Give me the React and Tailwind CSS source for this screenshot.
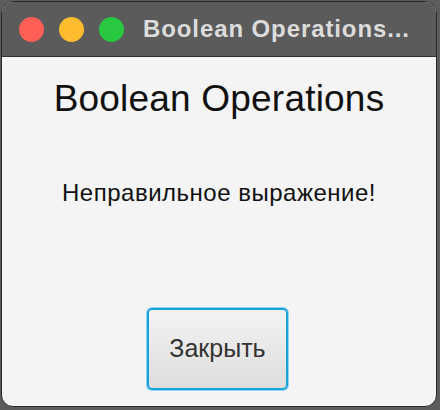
export default function App() {
  const lights = ['bg-[#fe5f57]', 'bg-[#febc2e]', 'bg-[#28c840]'];

  return (
    <div className="w-[440px] h-[410px] bg-[#5c5c5c] p-px" style={{ fontFamily: '"Liberation Sans", Arial, sans-serif' }}>
      <div className="w-[436px] h-[406px] rounded-[12px] border border-[#2a2a2a] overflow-hidden flex flex-col bg-[#f4f4f4]">
        {/* Title bar */}
        <div className="h-[55px] shrink-0 bg-[#5b5b5b] border-b border-[#2e2e2e] flex items-center pl-[17px]">
          <div className="flex items-center gap-[15px]">
            {lights.map((c) => (
              <span key={c} className={`w-[25px] h-[25px] rounded-full ${c}`} />
            ))}
          </div>
          <span className="ml-[19px] text-[24px] font-bold text-[#dcdcdc] tracking-[0.9px]">
            Boolean Operations...
          </span>
        </div>

        {/* Body */}
        <div className="flex-1 flex flex-col items-center">
          <h1 className="mt-[20px] text-[37px] leading-[44px] text-[#111] tracking-[0.2px]">Boolean Operations</h1>
          <p className="mt-[57px] text-[24px] leading-[30px] text-[#111] tracking-[0.5px]">Неправильное выражение!</p>
          <button className="mt-[100px] ml-[-3px] w-[141px] h-[82px] rounded-[5px] border-[2px] border-[#19a2da] bg-gradient-to-b from-[#f3f3f3] to-[#dddddd] text-[25px] text-[#333] shadow-[0_0_0_1px_#8fd6f2]">
            Закрыть
          </button>
        </div>
      </div>
    </div>
  );
}
